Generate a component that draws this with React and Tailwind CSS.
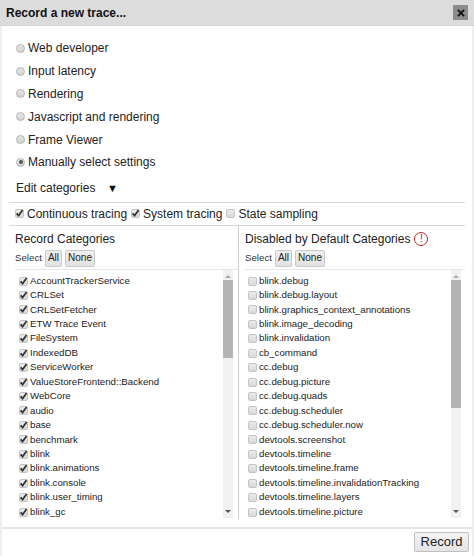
import { useState } from "react";

const RADIOS = ["Web developer", "Input latency", "Rendering", "Javascript and rendering", "Frame Viewer", "Manually select settings"];

const RECORD = [
  "AccountTrackerService", "CRLSet", "CRLSetFetcher", "ETW Trace Event", "FileSystem", "IndexedDB",
  "ServiceWorker", "ValueStoreFrontend::Backend", "WebCore", "audio", "base", "benchmark", "blink",
  "blink.animations", "blink.console", "blink.user_timing", "blink_gc",
];

const DISABLED = [
  "blink.debug", "blink.debug.layout", "blink.graphics_context_annotations", "blink.image_decoding",
  "blink.invalidation", "cb_command", "cc.debug", "cc.debug.picture", "cc.debug.quads", "cc.debug.scheduler",
  "cc.debug.scheduler.now", "devtools.screenshot", "devtools.timeline", "devtools.timeline.frame",
  "devtools.timeline.invalidationTracking", "devtools.timeline.layers", "devtools.timeline.picture",
];

function Radio({ on }) {
  return (
    <span className="flex h-[9px] w-[9px] shrink-0 items-center justify-center rounded-full border border-[#b4b4b4] bg-gradient-to-b from-[#e6e6e6] to-[#d2d2d2]">
      {on && <span className="h-[4px] w-[4px] rounded-full bg-[#555555]" />}
    </span>
  );
}

function Check({ on }) {
  return (
    <span className="flex h-[9px] w-[9px] shrink-0 items-center justify-center rounded-[2px] border border-[#c4c4c4] bg-gradient-to-b from-[#ececec] to-[#d8d8d8]">
      {on && (
        <svg viewBox="0 0 9 9" className="h-[9px] w-[9px] shrink-0 overflow-visible">
          <path d="M1.6 4.4 L3.6 6.6 L7.6 1" fill="none" stroke="#333333" strokeWidth="1.7" />
        </svg>
      )}
    </span>
  );
}

function SmallButton({ children }) {
  return (
    <button className="h-[17px] rounded-[2px] border border-[#c8c8c8] bg-gradient-to-b from-[#f0f0f0] to-[#e2e2e2] px-[2px] text-[10px] leading-[14px] text-[#222222]">
      {children}
    </button>
  );
}

function Scrollbar({ thumb }) {
  return (
    <div className="flex w-[10px] shrink-0 flex-col items-center bg-[#f1f1f1]">
      <div className="mt-[5px] mb-[2px] h-0 w-0 border-x-[3px] border-b-[3px] border-x-transparent border-b-[#a8a8a8]" />
      <div className={`w-full bg-[#b4b4b4] ${thumb}`} />
      <div className="mt-auto mb-[5px] h-0 w-0 border-x-[3px] border-t-[3px] border-x-transparent border-t-[#555555]" />
    </div>
  );
}

function CategoryColumn({ title, warn, items, on, thumb, listClass, className }) {
  return (
    <div className={className}>
      <div className="flex h-[22px] items-center gap-[4px] text-[12px] text-[#222222]">
        {title}
        {warn && (
          <span className="flex h-[14px] w-[14px] items-center justify-center rounded-full border border-[#c62828] text-[11px] leading-none text-[#c62828]">
            !
          </span>
        )}
      </div>
      <div className="flex h-[17px] items-center gap-[3px] text-[9.7px] text-[#333333]">
        Select
        <SmallButton>All</SmallButton>
        <SmallButton>None</SmallButton>
      </div>
      <div className={`mt-[2px] flex h-[249px] border-t border-[#e6e6e6] ${listClass}`}>
        <ul className="min-w-0 flex-1 overflow-hidden pt-[4px]">
          {items.map((name) => (
            <li key={name} className="flex h-[14.44px] items-center gap-[2px] whitespace-nowrap text-[9.7px] text-[#222222]">
              <Check on={on} />
              {name}
            </li>
          ))}
        </ul>
        <Scrollbar thumb={thumb} />
      </div>
    </div>
  );
}

export default function App() {
  const [selected] = useState(5);

  return (
    <div className="flex h-[556px] w-[474px] flex-col overflow-hidden bg-white font-['Liberation_Sans',Arial,sans-serif]">
      <header className="flex h-[26px] shrink-0 items-center justify-between border-b border-[#d4d4d4] bg-[#dcdcdc] px-[6px]">
        <h1 className="text-[12px] font-bold text-[#111111]">Record a new trace...</h1>
        <button className="flex h-[15px] w-[15px] items-center justify-center bg-[#8c8c8c]">
          <svg viewBox="0 0 9 9" className="h-[8px] w-[8px]">
            <path d="M1 1 L8 8 M8 1 L1 8" stroke="#111111" strokeWidth="2" />
          </svg>
        </button>
      </header>

      <main className="flex min-h-0 flex-1 flex-col border-x-[2px] border-[#efefef]">
        <div className="flex flex-col px-[7px]">
          <div className="flex flex-col pl-[7px] pt-[11px]">
            {RADIOS.map((label, i) => (
              <label key={label} className="flex h-[22.8px] items-center gap-[3px] text-[12px] text-[#222222]">
                <Radio on={i === selected} />
                {label}
              </label>
            ))}
            <div className="flex h-[28px] items-center text-[12px] text-[#222222]">
              <span className="w-[91px]">Edit categories</span>
              <span className="text-[11px] text-[#111111]">▼</span>
            </div>
          </div>

          <div className="flex h-[24px] items-center gap-[3px] border-y border-[#d8d8d8] pl-[6px] text-[12px] text-[#222222]">
            <Check on />
            <span className="mr-[1px]">Continuous tracing</span>
            <Check on />
            <span className="mr-[1px]">System tracing</span>
            <Check />
            <span>State sampling</span>
          </div>

          <div className="flex h-[301px] shrink-0">
            <CategoryColumn
              title="Record Categories"
              items={RECORD}
              on
              thumb="h-[78px]"
              listClass="pl-[4px] pr-[5px]"
              className="w-[229px] shrink-0 pl-[6px] pt-[2px]"
            />
            <CategoryColumn
              title="Disabled by Default Categories"
              warn
              items={DISABLED}
              thumb="h-[128px]"
              listClass="pl-[3px] pr-[4px]"
              className="mb-[8px] min-w-0 flex-1 border-l border-[#cfcfcf] pl-[6px] pt-[2px]"
            />
          </div>
        </div>

        <footer className="flex flex-1 items-start justify-end border-t-[2px] border-[#e4e4e4] pr-[3px] pt-[3px]">
          <button className="h-[20px] w-[55px] rounded-[2px] border border-[#c0c0c0] bg-gradient-to-b from-[#f4f4f4] to-[#e4e4e4] text-[13px] leading-[18px] text-[#222222]">
            Record
          </button>
        </footer>
      </main>
    </div>
  );
}
